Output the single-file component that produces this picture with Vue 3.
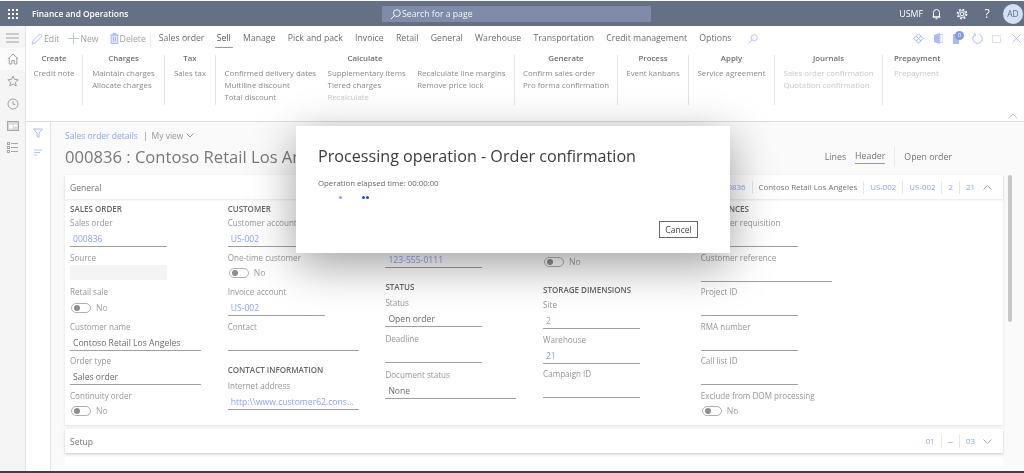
<script setup>
const tabs = ["Sales order", "Sell", "Manage", "Pick and pack", "Invoice", "Retail", "General", "Warehouse", "Transportation", "Credit management", "Options"];

const ribbon = [
  { title: "Create", cls: "g1", cols: [[{ t: "Credit note" }]] },
  { title: "Charges", cls: "g2", cols: [[{ t: "Maintain charges" }, { t: "Allocate charges" }]] },
  { title: "Tax", cls: "g3", cols: [[{ t: "Sales tax" }]] },
  {
    title: "Calculate", cls: "g4", cols: [
      [{ t: "Confirmed delivery dates" }, { t: "Multiline discount" }, { t: "Total discount" }],
      [{ t: "Supplementary items" }, { t: "Tiered charges" }, { t: "Recalculate", off: true }],
      [{ t: "Recalculate line margins" }, { t: "Remove price lock" }],
    ]
  },
  { title: "Generate", cls: "g5", cols: [[{ t: "Confirm sales order" }, { t: "Pro forma confirmation" }]] },
  { title: "Process", cls: "g6", cols: [[{ t: "Event kanbans" }]] },
  { title: "Apply", cls: "g7", cols: [[{ t: "Service agreement" }]] },
  { title: "Journals", cls: "g8", cols: [[{ t: "Sales order confirmation", off: true }, { t: "Quotation confirmation", off: true }]] },
  { title: "Prepayment", cls: "g9", cols: [[{ t: "Prepayment", off: true }]] },
];

const columns = [
  {
    fields: [
      { kind: "head", text: "SALES ORDER" },
      { label: "Sales order", value: "000836", link: true },
      { label: "Source", kind: "box" },
      { label: "Retail sale", kind: "toggle" },
      { label: "Customer name", value: "Contoso Retail Los Angeles", long: true },
      { label: "Order type", value: "Sales order", long: true },
      { label: "Continuity order", kind: "toggle" },
    ]
  },
  {
    fields: [
      { kind: "head", text: "CUSTOMER" },
      { label: "Customer account", value: "US-002", link: true },
      { label: "One-time customer", kind: "toggle" },
      { label: "Invoice account", value: "US-002", link: true },
      { label: "Contact", value: "", long: true },
      { kind: "head", text: "CONTACT INFORMATION", gap: true },
      { label: "Internet address", value: "http:\\\\www.customer62.cons...", link: true, long: true },
    ]
  },
  {
    cls: "wide",
    fields: [
      { kind: "skip", cls: "skip3" },
      { label: "Telephone", value: "123-555-0111", link: true },
      { kind: "head", text: "STATUS", gap: true },
      { label: "Status", value: "Open order" },
      { label: "Deadline", value: "" },
      { label: "Document status", value: "None", long: true },
    ]
  },
  {
    fields: [
      { kind: "skip", cls: "skip4" },
      { label: "On hold", kind: "toggle" },
      { kind: "head", text: "STORAGE DIMENSIONS", gap: true },
      { label: "Site", value: "2", link: true },
      { label: "Warehouse", value: "21", link: true },
      { label: "Campaign ID", value: "" },
    ]
  },
  {
    fields: [
      { kind: "head", text: "REFERENCES" },
      { label: "Customer requisition", value: "" },
      { label: "Customer reference", value: "", long: true },
      { label: "Project ID", value: "" },
      { label: "RMA number", value: "" },
      { label: "Call list ID", value: "" },
      { label: "Exclude from DOM processing", kind: "toggle" },
    ]
  },
];
</script>

<template>
  <div class="app">
    <header class="topbar">
      <svg class="waffle" width="12" height="12" viewBox="0 0 12 12" fill="#fff">
        <rect x="1" y="1" width="2" height="2" /><rect x="5" y="1" width="2" height="2" /><rect x="9" y="1" width="2" height="2" />
        <rect x="1" y="5" width="2" height="2" /><rect x="5" y="5" width="2" height="2" /><rect x="9" y="5" width="2" height="2" />
        <rect x="1" y="9" width="2" height="2" /><rect x="5" y="9" width="2" height="2" /><rect x="9" y="9" width="2" height="2" />
      </svg>
      <div class="brand">Finance and Operations</div>
      <div class="search">
        <svg width="11" height="11" viewBox="0 0 12 12" fill="none" stroke="#fff" stroke-width="1">
          <circle cx="7.5" cy="4.5" r="3.7" /><path d="M4.8 7.2 1 11" />
        </svg>
        <span>Search for a page</span>
      </div>
      <div class="top-right">
        <span class="company">USMF</span>
        <svg class="bell" width="11" height="12" viewBox="0 0 11 12" fill="none" stroke="#fff" stroke-width="1">
          <path d="M2.5 9V4.500a3 3 0 0 1 6 0V9ZM1.500 9h8M4.500 10.800h2" />
        </svg>
        <svg class="gear" width="12" height="12" viewBox="0 0 12 12" fill="none" stroke="#fff" stroke-width="1">
          <circle cx="6" cy="6" r="1.800" />
          <circle cx="6" cy="6" r="4.600" stroke-width="1.600" stroke-dasharray="1.800 1.810" />
          <circle cx="6" cy="6" r="3.500" stroke-width=".8" />
        </svg>
        <span class="help">?</span>
        <span class="avatar">AD</span>
      </div>
    </header>

    <div class="body">
      <nav class="nav">
        <svg class="ham" width="13" height="10" viewBox="0 0 13 10" stroke="#a0a0a0" stroke-width="1"><path d="M0 1h13M0 5h13M0 9h13" /></svg>
        <div class="nav-home">
          <svg width="12" height="12" viewBox="0 0 12 12" fill="none" stroke="#a0a0a0"><path d="M.8 6 6 1l5.200 5M2.200 5v6h2.600V7.500h2.400V11h2.600V5" /></svg>
        </div>
        <svg width="12" height="12" viewBox="0 0 12 12" fill="none" stroke="#a0a0a0"><path d="m6 1 1.500 3.400 3.700.4-2.800 2.400.8 3.600L6 9l-3.200 1.800.8-3.600L.8 4.800l3.700-.4Z" /></svg>
        <svg width="12" height="12" viewBox="0 0 12 12" fill="none" stroke="#a0a0a0"><circle cx="6" cy="6" r="5" /><path d="M6 3v3.300h2.500" /></svg>
        <svg width="12" height="10" viewBox="0 0 12 10" fill="none" stroke="#a8a8a8"><rect x=".5" y=".5" width="11" height="9" fill="#d8d8d8" /><rect x="2" y="3.500" width="3.500" height="4" fill="#fff" stroke="none" /><rect x="6.500" y="3.500" width="3.500" height="2" fill="#fff" stroke="none" /></svg>
        <svg width="11" height="11" viewBox="0 0 11 11" fill="none" stroke="#a8a8a8"><rect x=".5" y=".5" width="2" height="2" /><rect x=".5" y="4.500" width="2" height="2" /><rect x=".5" y="8.500" width="2" height="2" /><path d="M4 1.500h7M4 5.500h7M4 9.500h7" /></svg>
      </nav>

      <main class="main">
        <div class="actionbar">
          <span class="action">
            <svg width="12" height="12" viewBox="0 0 12 12" fill="none" stroke="#b4c3f0"><path d="M1 11l.8-3L8.700 1 11 3.200 4 10.200Z" /></svg>
            Edit
          </span>
          <span class="action">
            <svg width="11" height="11" viewBox="0 0 11 11" stroke="#b4c3f0"><path d="M5.500 0v11M0 5.500h11" /></svg>
            New
          </span>
          <span class="action del">
            <svg width="9" height="11" viewBox="0 0 9 11" fill="#dfe5f8" stroke="#a9bbef"><path d="M.5 2h8M3 2V.5h3V2M1.200 2v8.500h6.600V2Z" /><path d="M3.500 4v4.500M5.500 4v4.500" /></svg>
            Delete
          </span>
          <span class="action-sep"></span>
          <span v-for="t in tabs" :key="t" class="tab" :class="{ active: t === 'Sell' }">{{ t }}</span>
          <svg class="tab-search" width="10" height="10" viewBox="0 0 12 12" fill="none" stroke="#a9bbef">
            <circle cx="7.500" cy="4.500" r="3.700" /><path d="M4.800 7.200 1 11" />
          </svg>
          <div class="action-right">
            <svg width="11" height="11" viewBox="0 0 11 11" fill="none" stroke="#a9bbef"><path d="M5.500.7 10.300 5.500 5.500 10.300.7 5.500Z" /><path d="M3 3l5 5M8 3l-5 5" /></svg>
            <svg class="ico-doc" width="9" height="11" viewBox="0 0 9 11"><path d="M0 2 6 0v11L0 9Z" fill="#a9bbef" /><path d="M6 1.500h3v8H6Z" fill="none" stroke="#c6d2f3" /></svg>
            <span class="badge-wrap"><i class="badge-doc"></i><span class="badge">0</span></span>
            <svg width="11" height="11" viewBox="0 0 11 11" fill="none" stroke="#a9bbef"><path d="M3.500 1.400a4.700 4.700 0 1 0 4 0M3.500 1.400 1.800 .5M3.500 1.400l-.4 1.800" /></svg>
            <svg width="10" height="9" viewBox="0 0 10 9" fill="none" stroke="#dcdfe8"><path d="M7 1.500H.5v7h8V3" /><path d="M7 2.500 9.500 .3" /></svg>
            <svg width="9" height="9" viewBox="0 0 9 9" stroke="#b4c3f0"><path d="m.5.500 8 8M8.500.500l-8 8" /></svg>
          </div>
        </div>

        <section class="ribbon">
          <div v-for="g in ribbon" :key="g.title" class="rgroup" :class="g.cls">
            <div class="rtitle">{{ g.title }}</div>
            <div class="rcols">
              <div v-for="(c, i) in g.cols" :key="i" class="rcol">
                <span v-for="it in c" :key="it.t" class="ritem" :class="{ off: it.off }">{{ it.t }}</span>
              </div>
            </div>
          </div>
          <svg class="rcollapse" width="10" height="6" viewBox="0 0 10 6" fill="none" stroke="#c9c9c9"><path d="m.5 5.500 4.500-4.500 4.500 4.500" /></svg>
        </section>

        <div class="workspace">
          <aside class="strip">
            <svg width="10" height="10" viewBox="0 0 10 10" fill="none" stroke="#a9bbef"><path d="M.5 1h9L6 5v4.500L4 8V5Z" /></svg>
            <svg width="9" height="7" viewBox="0 0 9 7" stroke="#b4c3f0"><path d="M0 1h8M0 3.500h6M0 6h3" /></svg>
          </aside>

          <div class="content">
            <div class="page-head">
              <div class="crumbs">
                <span class="crumb-link">Sales order details</span>
                <span class="crumb-sep">|</span>
                <span>My view</span>
                <svg width="8" height="5" viewBox="0 0 8 5" fill="none" stroke="#999"><path d="m.5.500 3.500 3.500 3.500-3.500" /></svg>
              </div>
              <div class="title-row">
                <h1 class="title">000836 : Contoso Retail Los Angeles</h1>
                <div class="views">
                  <span>Lines</span>
                  <span class="view-active">Header</span>
                  <span class="view-sep"></span>
                  <span>Open order</span>
                </div>
              </div>
            </div>

            <div class="cards-wrap">
              <div class="cards">
                <section class="card">
                  <div class="card-head">
                    <span>General</span>
                    <div class="summary">
                      <span class="lnk">000836</span>
                      <span>Contoso Retail Los Angeles</span>
                      <span class="lnk">US-002</span>
                      <span class="lnk">US-002</span>
                      <span class="lnk">2</span>
                      <span class="lnk">21</span>
                    </div>
                    <svg class="chev" width="9" height="5" viewBox="0 0 9 5" fill="none" stroke="#aaa"><path d="m.5 4.500 4-4 4 4" /></svg>
                  </div>
                  <div class="form">
                    <div v-for="(col, i) in columns" :key="i" class="col" :class="col.cls">
                      <template v-for="(f, j) in col.fields" :key="j">
                        <div v-if="f.kind === 'skip'" :class="f.cls"></div>
                        <div v-else-if="f.kind === 'head'" class="col-head" :class="{ gap: f.gap }">{{ f.text }}</div>
                        <div v-else class="field">
                          <label class="lbl">{{ f.label }}</label>
                          <div v-if="f.kind === 'box'" class="box"></div>
                          <div v-else-if="f.kind === 'toggle'" class="toggle-row">
                            <span class="toggle"><i></i></span>
                            <span>No</span>
                          </div>
                          <div v-else class="val" :class="{ lnk: f.link, long: f.long }">{{ f.value }}</div>
                        </div>
                      </template>
                    </div>
                  </div>
                </section>

                <section class="card setup">
                  <div class="card-head">
                    <span>Setup</span>
                    <div class="summary">
                      <span class="lnk">01</span>
                      <span>--</span>
                      <span class="lnk">03</span>
                    </div>
                    <svg class="chev" width="9" height="5" viewBox="0 0 9 5" fill="none" stroke="#aaa"><path d="m.5.500 4 4 4-4" /></svg>
                  </div>
                </section>
                <section class="card stub"></section>
              </div>
              <div class="scrollbar"><div class="thumb"></div></div>
            </div>
          </div>
        </div>
      </main>
    </div>
    <div class="taskbar"></div>

    <div class="dialog">
      <h2 class="dlg-title">Processing operation - Order confirmation</h2>
      <div class="dlg-text">Operation elapsed time: 00:00:00</div>
      <div class="dlg-dots"><i class="faint"></i><i></i><i></i></div>
      <div class="dlg-foot"><button class="cancel">Cancel</button></div>
    </div>
  </div>
</template>

<style>
html, body { margin: 0; padding: 0; overflow: hidden; background: #fff; }
</style>

<style scoped>
.app {
  position: relative;
  width: 1024px;
  height: 473px;
  overflow: hidden;
  display: flex;
  flex-direction: column;
  font-family: "Open Sans", "Noto Sans", sans-serif;
  background: #fafafa;
  color: #666;
  filter: blur(.3px);
}

.topbar {
  flex: none;
  height: 25px;
  margin-top: 1px;
  background: #667085;
  color: #fff;
  display: flex;
  align-items: center;
  padding-left: 7px;
  box-sizing: border-box;
}
.brand { margin-left: 13px; width: 350px; font-size: 8.4px; font-weight: 600; }
.search {
  width: 269px;
  height: 16px;
  background: #7f8ba8;
  border-radius: 1px;
  display: flex;
  align-items: center;
  gap: 1px;
  padding-left: 8px;
  box-sizing: border-box;
  font-size: 8.7px;
  margin-top: 1px;
  color: #f4f6fa;
}
.top-right { margin-left: auto; display: flex; align-items: center; padding-right: 1px; font-size: 8.8px; }
.bell { margin-left: 8px; }
.gear { margin-left: 14px; }
.help { font-size: 12px; margin-left: 15px; width: 8px; text-align: center; }
.avatar {
  width: 20px; height: 20px; border-radius: 50%; background: #d4e0f5; color: #5f6b85;
  display: flex; align-items: center; justify-content: center; font-size: 8.5px; margin-left: 12px;
}

.body { flex: 1; display: flex; min-height: 0; }

.nav {
  flex: none;
  width: 25px;
  background: #f5f5f5;
  border-right: 1px solid #e4e4e4;
  display: flex;
  flex-direction: column;
  align-items: center;
  padding-top: 7px;
  box-sizing: content-box;
}
.nav svg { flex: none; margin-bottom: 11px; }
.nav .ham { margin-bottom: 5px; }
.nav-home { width: 100%; height: 22px; display: flex; align-items: center; justify-content: center; background: #fbfbfb; margin-bottom: 5px; }
.nav-home svg { margin: 0; }

.main { flex: 1; min-width: 0; display: flex; flex-direction: column; background: #fff; }

.actionbar {
  flex: none;
  height: 23px;
  display: flex;
  align-items: center;
  font-size: 8.7px;
  padding: 2px 0 0 5px;
  box-sizing: border-box;
}
.action { display: flex; align-items: center; gap: 1px; color: #a0a0a0; margin-right: 9px; }
.action.del { margin-left: 2px; margin-right: 8px; }
.action-sep { width: 1px; height: 14px; background: #ececec; margin: 0 8px 0 -4px; }
.tab { color: #6c6c6c; margin-right: 12.300px; height: 19px; line-height: 19px; box-sizing: border-box; white-space: nowrap; }
.tab.active { color: #555; border-bottom: 1px solid #7d9be8; padding: 0 2px; margin: 0 10.300px 0 -2px; }
.tab-search { margin-left: 4px; }
.action-right { margin-left: auto; display: flex; align-items: center; gap: 9.500px; padding-right: 3.500px; }
.badge-wrap { position: relative; display: block; width: 10px; height: 11px; margin: 0 -1px 0 1px; }
.badge-doc { position: absolute; left: 0; top: 1px; width: 6px; height: 10px; background: #a9bbef; }
.badge {
  position: absolute; left: 2px; top: -2px;
  width: 9px; height: 9px; border-radius: 50%; background: #7f9be4; color: #fff;
  font-size: 6px; line-height: 9px; text-align: center;
}

.ribbon {
  flex: none;
  position: relative;
  height: 73px;
  display: flex;
  align-items: flex-start;
  border-bottom: 1px solid #dedede;
  padding-top: 6px;
  box-sizing: border-box;
  font-size: 7.85px;
}
.rgroup { box-sizing: border-box; height: 50px; border-right: 1px solid #e4e4e4; text-align: center; flex: none; }
.g1 { width: 57px; }
.g2 { width: 82px; }
.g3 { width: 51px; }
.g4 { width: 299px; }
.g5 { width: 103px; }
.g6 { width: 71px; }
.g7 { width: 86px; }
.g8 { width: 108px; }
.g9 { width: 74px; border-right: 0; padding-left: 11px; }
.g9 .rcols { justify-content: flex-start; }
.g9 .rtitle { text-align: left; }
.rtitle { font-weight: 600; color: #6f6f6f; line-height: 12px; margin-top: -3px; white-space: nowrap; }
.rcols { display: flex; justify-content: center; gap: 11.500px; margin-top: 3px; }
.rcol { display: flex; flex-direction: column; align-items: flex-start; }
.ritem { line-height: 12px; color: #8a8a8a; white-space: nowrap; }
.ritem.off { color: #c8c8c8; }
.rcollapse { position: absolute; right: 6px; bottom: 2px; }

.workspace { flex: 1; min-height: 0; display: flex; }
.strip {
  flex: none;
  width: 24px;
  background: #fff;
  border-right: 1px solid #e2e2e2;
  display: flex;
  flex-direction: column;
  align-items: center;
  gap: 11px;
  padding-top: 6px;
  padding-right: 0;
  box-sizing: content-box;
}
.content { flex: 1; min-width: 0; background: #fafafa; padding-left: 14px; display: flex; flex-direction: column; }

.page-head { flex: none; height: 53px; }
.crumbs { display: flex; align-items: center; gap: 5px; font-size: 8.5px; height: 13px; padding-top: 7px; color: #969696; }
.crumb-link { color: #8fa6ef; }
.crumb-sep { color: #888; margin-right: -1px; }
.crumbs svg { margin-left: -2px; }
.title-row { display: flex; align-items: center; justify-content: space-between; padding-right: 72px; margin-top: 3px; }
.title { margin: 0; font-size: 16.6px; font-weight: 400; color: #787878; line-height: 24px; white-space: nowrap; }
.views { display: flex; align-items: center; gap: 9px; font-size: 8.8px; color: #747474; }
.view-active { border-bottom: 1px solid #7d9be8; line-height: 13px; }
.view-sep { width: 1px; height: 20px; background: #e8e8e8; }

.cards-wrap { flex: 1; min-height: 0; display: flex; }
.cards { width: 938px; flex: none; display: flex; flex-direction: column; gap: 4px; }
.card { background: #fff; box-shadow: 0 1px 3px rgba(0, 0, 0, .1); }
.card-head {
  height: 24px;
  display: flex;
  align-items: center;
  padding: 0 11px 0 5px;
  font-size: 8.5px;
  color: #747474;
  box-shadow: 0 1px 2px rgba(0, 0, 0, .1);
}
.summary { margin-left: auto; display: flex; align-items: center; font-size: 7.9px; }
.summary span { padding: 0 6px; line-height: 13px; border-left: 1px solid #e6e6e6; }
.summary span:first-child { border-left: 0; }
.lnk { color: #8ba3ee !important; }
.chev { margin-left: 2px; }

.form { display: flex; height: 226px; padding: 2px 0 0 5px; box-sizing: border-box; }
.col { width: 157.700px; flex: none; display: flex; flex-direction: column; gap: 3.500px; }
.col-head { font-size: 8px; font-weight: 600; color: #666; line-height: 15px; height: 15px; margin-bottom: -3.500px; white-space: nowrap; }
.col-head.gap { margin-top: 8px; margin-bottom: -2px; }
.wide .field + .field { margin-top: 1.500px; }
.skip3 { height: 32px; }
.skip4 { height: 34.500px; }
.field { height: 31px; }
.lbl { display: block; font-size: 8.1px; line-height: 14px; color: #969696; white-space: nowrap; }
.val {
  width: 97px;
  height: 17px;
  box-sizing: border-box;
  border-bottom: 1px solid #a0a0a0;
  padding-left: 3px;
  font-size: 8.6px;
  line-height: 19px;
  color: #6a6a6a;
  white-space: nowrap;
}
.val.long { width: 131px; }
.box { width: 97px; height: 15px; background: #f4f4f4; }
.toggle-row { display: flex; align-items: center; gap: 5px; height: 17px; font-size: 8.6px; color: #a0a0a0; padding-left: 1px; }
.toggle { width: 18px; height: 8px; border: 1px solid #b0b0b0; border-radius: 6px; position: relative; display: block; }
.toggle i { position: absolute; left: 2px; top: 1px; width: 6px; height: 6px; border-radius: 50%; background: #8e8e8e; }

.setup { flex: none; }
.stub { height: 9px; flex: none; box-shadow: none; }

.scrollbar { flex: none; width: 5px; margin-left: 5px; }
.thumb { width: 4px; height: 147px; background: #c8c8c8; border-radius: 2px; }

.taskbar { flex: none; height: 2px; background: #3a4146; }

.dialog {
  position: absolute;
  left: 296px;
  top: 126px;
  width: 434px;
  height: 127px;
  background: #fff;
  box-shadow: 0 12px 45px rgba(0, 0, 0, .38);
  padding: 18px 32px 0 22px;
  box-sizing: border-box;
  display: flex;
  flex-direction: column;
}
.dlg-title { margin: 0; font-size: 16.15px; font-weight: 400; line-height: 24px; color: #3c3c3c; white-space: nowrap; }
.dlg-text { font-size: 7.8px; line-height: 12px; margin-top: 9px; color: #666; }
.dlg-dots { display: flex; height: 3px; margin-top: 7px; padding-left: 21px; gap: 1px; }
.dlg-dots i { width: 3px; height: 3px; border-radius: 50%; background: #2b4fb5; }
.dlg-dots .faint { background: #8ba3ee; margin-right: 19px; }
.dlg-foot { margin-top: auto; margin-bottom: 15px; display: flex; justify-content: flex-end; }
.cancel {
  width: 39px;
  height: 17px;
  box-sizing: border-box;
  padding: 0;
  background: #fff;
  border: 1px solid #666;
  font-family: inherit;
  font-size: 8.5px;
  color: #444;
}
</style>
